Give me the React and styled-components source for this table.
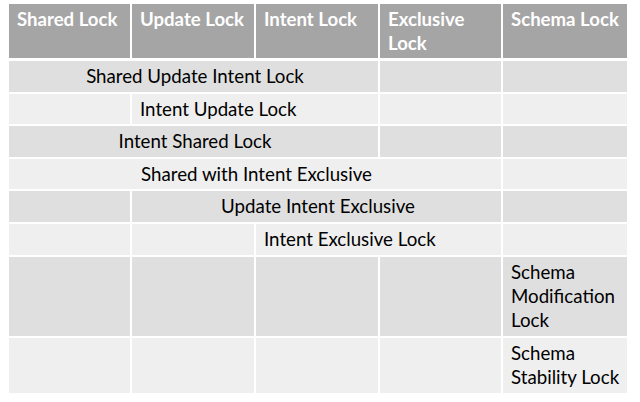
import React from 'react';
import styled, { createGlobalStyle } from 'styled-components';

const GlobalStyle = createGlobalStyle`
  html, body {
    margin: 0;
    padding: 0;
    background: #ffffff;
  }
  body {
    font-family: Lato, "Liberation Sans", sans-serif;
  }
`;

const COLUMNS = '121px 122px 122px 121px 124px';

const Page = styled.div`
  padding: 4px 0 0 9px;
  width: 618px;
`;

const Table = styled.div`
  display: flex;
  flex-direction: column;
  gap: 2px;
`;

const Row = styled.div`
  display: grid;
  grid-template-columns: ${COLUMNS};
  column-gap: 2px;
  height: ${(p) => p.$height}px;
  margin-bottom: ${(p) => (p.$header ? 1 : 0)}px;
`;

const HeadCell = styled.div`
  background: #a5a5a5;
  color: #ffffff;
  font-weight: 700;
  font-size: 18.6px;
  line-height: 24px;
  padding: 3px 5px 0 8px;
`;

const Cell = styled.div`
  grid-column: span ${(p) => p.$span || 1};
  background: ${(p) => (p.$tone === 'dark' ? '#dfdfdf' : '#efefef')};
  color: #000000;
  font-size: 18.7px;
  line-height: 24px;
  padding: 3px 5px 0 8px;
  text-align: ${(p) => (p.$center ? 'center' : 'left')};
`;

const headers = ['Shared Lock', 'Update Lock', 'Intent Lock', 'Exclusive Lock', 'Schema Lock'];

const rows = [
  { tone: 'dark', height: 30.6, cells: [{ span: 3, text: 'Shared Update Intent Lock', center: true }, {}, {}] },
  { tone: 'light', height: 30.6, cells: [{}, { span: 2, text: 'Intent Update Lock' }, {}, {}] },
  { tone: 'dark', height: 30.6, cells: [{ span: 3, text: 'Intent Shared Lock', center: true }, {}, {}] },
  { tone: 'light', height: 30.6, cells: [{ span: 4, text: 'Shared with Intent Exclusive', center: true }, {}] },
  { tone: 'dark', height: 30.6, cells: [{}, { span: 3, text: 'Update Intent Exclusive', center: true }, {}] },
  { tone: 'light', height: 30.6, cells: [{}, {}, { span: 2, text: 'Intent Exclusive Lock' }, {}] },
  { tone: 'dark', height: 79, cells: [{}, {}, {}, {}, { text: 'Schema Modification Lock' }] },
  { tone: 'light', height: 55, cells: [{}, {}, {}, {}, { text: 'Schema Stability Lock' }] },
];

export default function App() {
  return (
    <Page>
      <GlobalStyle />
      <Table>
        <Row $height={54} $header>
          {headers.map((h) => (
            <HeadCell key={h}>{h}</HeadCell>
          ))}
        </Row>
        {rows.map((row, i) => (
          <Row key={i} $height={row.height}>
            {row.cells.map((c, j) => (
              <Cell key={j} $tone={row.tone} $span={c.span} $center={c.center}>
                {c.text}
              </Cell>
            ))}
          </Row>
        ))}
      </Table>
    </Page>
  );
}
